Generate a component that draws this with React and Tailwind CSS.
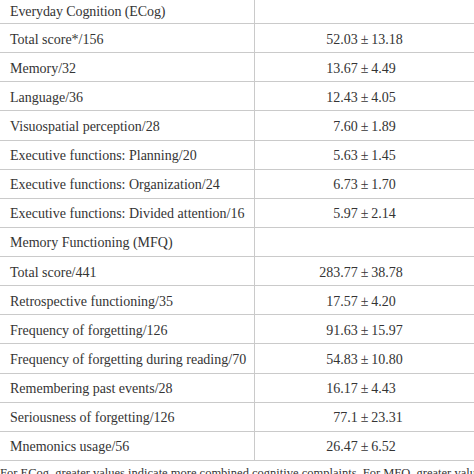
import React from "react";

const rows = [
  ["Total score*/156", "52.03", "13.18"],
  ["Memory/32", "13.67", "4.49"],
  ["Language/36", "12.43", "4.05"],
  ["Visuospatial perception/28", "7.60", "1.89"],
  ["Executive functions: Planning/20", "5.63", "1.45"],
  ["Executive functions: Organization/24", "6.73", "1.70"],
  ["Executive functions: Divided attention/16", "5.97", "2.14"],
  ["Memory Functioning (MFQ)", null, null],
  ["Total score/441", "283.77", "38.78"],
  ["Retrospective functioning/35", "17.57", "4.20"],
  ["Frequency of forgetting/126", "91.63", "15.97"],
  ["Frequency of forgetting during reading/70", "54.83", "10.80"],
  ["Remembering past events/28", "16.17", "4.43"],
  ["Seriousness of forgetting/126", "77.1", "23.31"],
  ["Mnemonics usage/56", "26.47", "6.52"],
];

function Value({ a, b }) {
  if (a == null) return null;
  return (
    <div className="grid w-full grid-cols-[1fr_auto_1fr] items-center">
      <span className="text-right">{a}</span>
      <span className="px-[3px]">±</span>
      <span className="text-left">{b}</span>
    </div>
  );
}

export default function App() {
  return (
    <div
      className="w-[474px] h-[474px] overflow-hidden bg-white text-[#343434] text-[14px]"
      style={{ fontFamily: '"Liberation Serif", "Times New Roman", serif' }}
    >
      <div className="grid grid-cols-[254px_220px]">
        <div className="h-[24px] flex items-center pl-[10px] border-b border-[#cacaca] whitespace-nowrap tracking-[-0.1px]">
          Everyday Cognition (ECog)
        </div>
        <div className="h-[24px] border-l border-b border-[#cacaca]"></div>
        {rows.map(([label, a, b], i) => (
          <React.Fragment key={i}>
            <div className="h-[29.13px] flex items-center pl-[10px] pt-[2px] border-b border-[#cacaca] whitespace-nowrap">
              {label}
            </div>
            <div className="h-[29.13px] flex items-center pt-[2px] border-l border-b border-[#cacaca]">
              <Value a={a} b={b} />
            </div>
          </React.Fragment>
        ))}
      </div>
      <div className="pt-[3px] text-[12.5px] whitespace-nowrap">
        For ECog, greater values indicate more combined cognitive complaints. For MFQ, greater values
      </div>
    </div>
  );
}
